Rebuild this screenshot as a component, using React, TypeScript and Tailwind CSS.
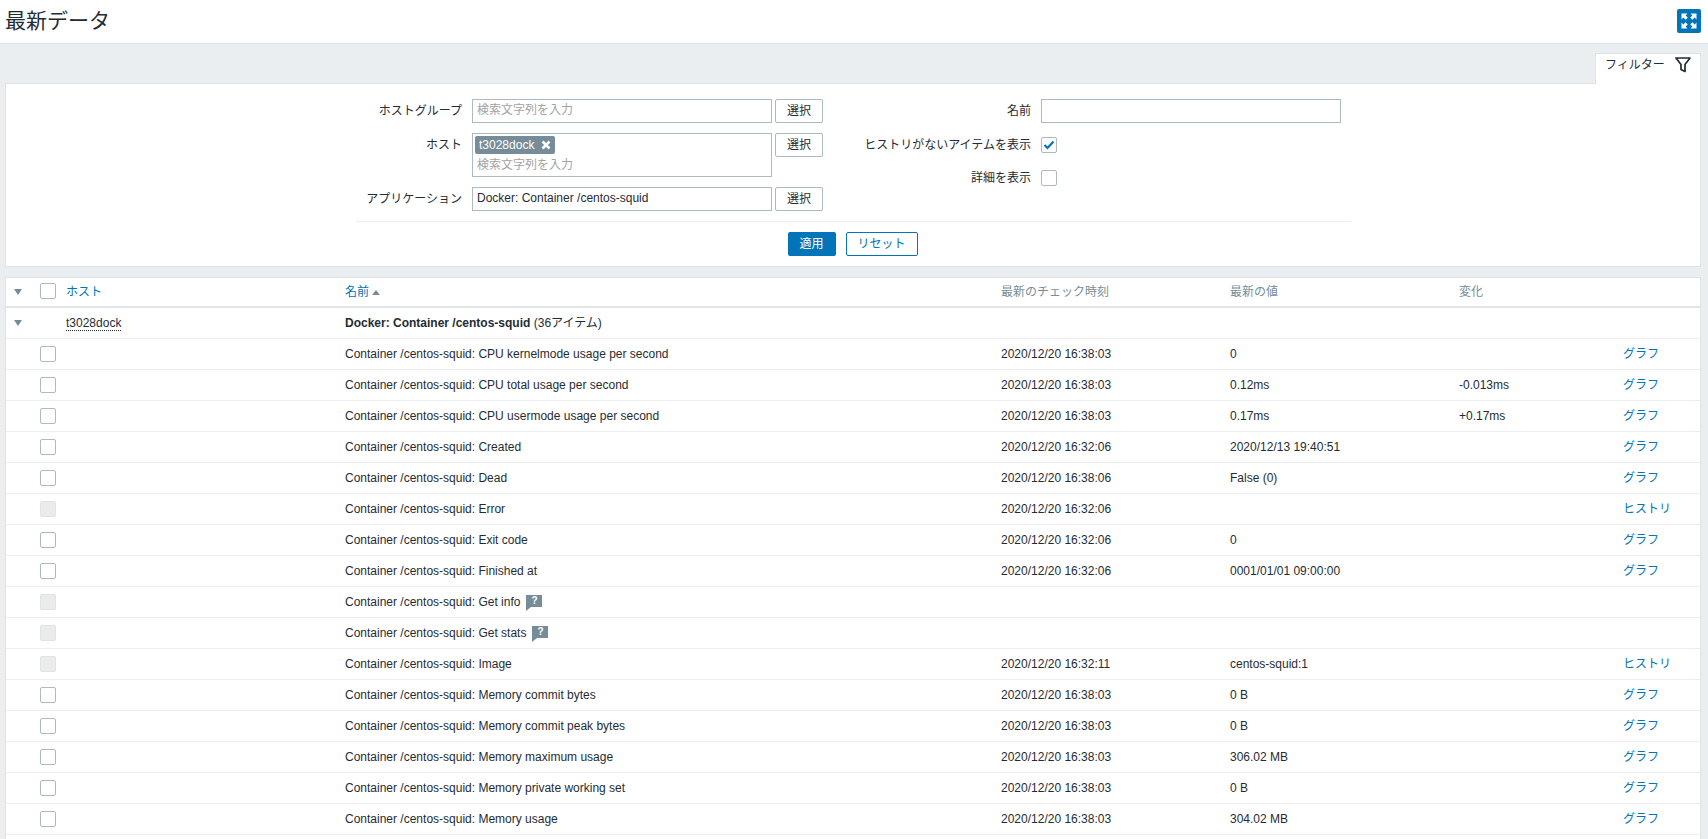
import React from "react";

const jp = "font-['Liberation_Sans','Noto_Sans_CJK_JP',sans-serif]";

function Check({ state = "off" }: { state?: "off" | "on" | "dis" }) {
  return (
    <span
      className={
        state === "dis"
          ? "flex h-4 w-4 items-center justify-center rounded-[2px] border border-[#dfe4e7] bg-[#ebebeb]"
          : "flex h-4 w-4 items-center justify-center rounded-[2px] border border-[#acbbc2] bg-white"
      }
    >
      {state === "on" && (
        <svg width="12" height="10" viewBox="0 0 12 10">
          <path d="M1.5 5 L4.5 8 L10.5 1.5" fill="none" stroke="#0275b8" strokeWidth="2.2" />
        </svg>
      )}
    </span>
  );
}

function Arrow() {
  return (
    <svg width="8" height="6" viewBox="0 0 8 6" className="block">
      <path d="M0 0 H8 L4 6 Z" fill="#768d99" />
    </svg>
  );
}

function Help() {
  return (
    <span className="relative mb-[3px] ml-[6px] inline-flex h-3 w-4 items-center justify-center bg-[#768d99] text-[10px] font-bold leading-none text-white">
      ?
      <svg width="6" height="4" viewBox="0 0 6 4" className="absolute left-0 top-3">
        <path d="M0 0 H5 L0 4 Z" fill="#768d99" />
      </svg>
    </span>
  );
}

function SelectBtn() {
  return (
    <button className="ml-[3px] flex h-6 w-12 items-center justify-center rounded-[2px] border border-[#acbbc2] bg-white text-xs text-[#1f2c33]">
      選択
    </button>
  );
}

function Label({ children, className }: { children: React.ReactNode; className: string }) {
  return <label className={"shrink-0 whitespace-nowrap pr-[10px] text-right text-xs leading-6 text-[#1f2c33] " + className}>{children}</label>;
}

function Placeholder() {
  return <div className="pl-[4px] text-xs leading-[21px] text-[#a3a3a3]">検索文字列を入力</div>;
}

type Item = {
  name: string;
  time?: string;
  value?: string;
  change?: string;
  action?: string;
  dis?: boolean;
  help?: boolean;
};

const items: Item[] = [
  { name: "CPU kernelmode usage per second", time: "2020/12/20 16:38:03", value: "0", action: "グラフ" },
  { name: "CPU total usage per second", time: "2020/12/20 16:38:03", value: "0.12ms", change: "-0.013ms", action: "グラフ" },
  { name: "CPU usermode usage per second", time: "2020/12/20 16:38:03", value: "0.17ms", change: "+0.17ms", action: "グラフ" },
  { name: "Created", time: "2020/12/20 16:32:06", value: "2020/12/13 19:40:51", action: "グラフ" },
  { name: "Dead", time: "2020/12/20 16:38:06", value: "False (0)", action: "グラフ" },
  { name: "Error", time: "2020/12/20 16:32:06", action: "ヒストリ", dis: true },
  { name: "Exit code", time: "2020/12/20 16:32:06", value: "0", action: "グラフ" },
  { name: "Finished at", time: "2020/12/20 16:32:06", value: "0001/01/01 09:00:00", action: "グラフ" },
  { name: "Get info", dis: true, help: true },
  { name: "Get stats", dis: true, help: true },
  { name: "Image", time: "2020/12/20 16:32:11", value: "centos-squid:1", action: "ヒストリ", dis: true },
  { name: "Memory commit bytes", time: "2020/12/20 16:38:03", value: "0 B", action: "グラフ" },
  { name: "Memory commit peak bytes", time: "2020/12/20 16:38:03", value: "0 B", action: "グラフ" },
  { name: "Memory maximum usage", time: "2020/12/20 16:38:03", value: "306.02 MB", action: "グラフ" },
  { name: "Memory private working set", time: "2020/12/20 16:38:03", value: "0 B", action: "グラフ" },
  { name: "Memory usage", time: "2020/12/20 16:38:03", value: "304.02 MB", action: "グラフ" },
];

const cols = "grid grid-cols-[34px_26px_279px_656px_229px_229px_164px_1fr] items-center";

export default function App() {
  return (
    <div className={"h-[839px] w-[1708px] overflow-hidden bg-[#ebeef0] text-xs text-[#1f2c33] " + jp}>
      <header className="flex h-[44px] items-start justify-between border-b border-[#dfe4e7] bg-white pl-[5px] pr-[7px]">
        <h1 className="pt-[5px] text-[21px] font-normal leading-[32px] text-[#1f2c33]">最新データ</h1>
        <button className="mt-[9px] flex h-6 w-6 items-center justify-center rounded-[2px] bg-[#0275b8]">
          <svg width="16" height="16" viewBox="0 0 16 16">
            <g fill="#fff">
              <path d="M0.5 0.5 H6.5 L4.6 2.4 L6.8 4.6 L4.6 6.8 L2.4 4.6 L0.5 6.5 Z" />
              <path d="M15.5 0.5 H9.5 L11.4 2.4 L9.2 4.6 L11.4 6.8 L13.6 4.6 L15.5 6.5 Z" />
              <path d="M0.5 15.5 H6.5 L4.6 13.6 L6.8 11.4 L4.6 9.2 L2.4 11.4 L0.5 9.5 Z" />
              <path d="M15.5 15.5 H9.5 L11.4 13.6 L9.2 11.4 L11.4 9.2 L13.6 11.4 L15.5 9.5 Z" />
            </g>
          </svg>
        </button>
      </header>

      <div className="ml-[5px] mt-[9px] w-[1696px]">
        <div className="flex justify-end">
          <div className="relative z-10 -mb-px flex h-[31px] w-[106px] items-start border border-b-0 border-[#dfe4e7] bg-white pl-[9px] pt-[3px]">
            <span className="text-xs leading-4">フィルター</span>
            <svg width="16" height="16" viewBox="0 0 16 16" className="ml-[10px]">
              <path d="M1 1 H15 L10 7.5 V14.5 L6 12.5 V7.5 Z" fill="none" stroke="#1f2c33" strokeWidth="1.7" strokeLinejoin="round" />
            </svg>
          </div>
        </div>

        <section className="h-[184px] border border-[#dfe4e7] bg-white">
          <div className="ml-[350px] w-[995px]">
            <div className="flex border-b border-[#ebeef0] pb-[10px] pt-[15px]">
              <div className="flex w-[485px] flex-col gap-[10px]">
                <div className="flex">
                  <Label className="w-[116px]">ホストグループ</Label>
                  <div className="h-6 w-[300px] border border-[#acbbc2] bg-white"><Placeholder /></div>
                  <SelectBtn />
                </div>
                <div className="flex">
                  <Label className="w-[116px]">ホスト</Label>
                  <div className="h-[44px] w-[300px] border border-[#acbbc2] bg-white pl-[2px] pt-[2px]">
                    <span className="flex h-[18px] w-20 items-center rounded-[2px] bg-[#768d99] pl-1 text-xs leading-none text-white">
                      t3028dock
                      <svg width="10" height="10" viewBox="0 0 10 10" className="ml-[7px]">
                        <path d="M1.5 1.5 L8.5 8.5 M8.5 1.5 L1.5 8.5" stroke="#fff" strokeWidth="2.6" />
                      </svg>
                    </span>
                    <div className="-ml-[2px] mt-[1px]"><Placeholder /></div>
                  </div>
                  <SelectBtn />
                </div>
                <div className="flex">
                  <Label className="w-[116px]">アプリケーション</Label>
                  <div className="h-6 w-[300px] border border-[#acbbc2] bg-white pl-[4px] text-xs leading-[21px]">Docker: Container /centos-squid</div>
                  <SelectBtn />
                </div>
              </div>
              <div className="flex flex-col gap-[10px]">
                <div className="flex">
                  <Label className="w-[200px]">名前</Label>
                  <div className="h-6 w-[300px] border border-[#acbbc2] bg-white" />
                </div>
                <div className="flex h-6 items-center">
                  <Label className="w-[200px]">ヒストリがないアイテムを表示</Label>
                  <Check state="on" />
                </div>
                <div className="flex h-[22px] items-center">
                  <Label className="w-[200px]">詳細を表示</Label>
                  <Check />
                </div>
              </div>
            </div>
            <div className="mt-[10px] flex justify-center gap-[10px] pr-[2px]">
              <button className="flex h-6 w-12 items-center justify-center rounded-[2px] bg-[#0275b8] text-xs text-white">適用</button>
              <button className="flex h-6 w-[72px] items-center justify-center rounded-[2px] border border-[#0275b8] bg-white text-xs text-[#0275b8]">リセット</button>
            </div>
          </div>
        </section>

        <section className="mt-[10px] border border-[#dfe4e7] bg-white pb-10">
          <div className={cols + " h-[30px] border-b-2 border-[#dfe4e7]"}>
            <div className="pl-2"><Arrow /></div>
            <div className="-mt-[2px]"><Check /></div>
            <a className="text-[#0275b8]">ホスト</a>
            <div className="flex items-center text-[#0275b8]">
              名前
              <svg width="8" height="5" viewBox="0 0 8 5" className="ml-[3px]">
                <path d="M0 5 H8 L4 0 Z" fill="#768d99" />
              </svg>
            </div>
            <div className="text-[#768d99]">最新のチェック時刻</div>
            <div className="text-[#768d99]">最新の値</div>
            <div className="text-[#768d99]">変化</div>
            <div />
          </div>
          <div className={cols + " h-[31px] border-b border-[#ebeef0]"}>
            <div className="pl-2"><Arrow /></div>
            <div />
            <div><span className="border-b border-dotted border-[#1f2c33] leading-4">t3028dock</span></div>
            <div><span className="font-bold">Docker: Container /centos-squid</span> (36アイテム)</div>
            <div />
            <div />
            <div />
            <div />
          </div>
          {items.map((it) => (
            <div key={it.name} className={cols + " h-[31px] border-b border-[#ebeef0]"}>
              <div />
              <div><Check state={it.dis ? "dis" : "off"} /></div>
              <div />
              <div className="flex items-center">
                Container /centos-squid: {it.name}
                {it.help && <Help />}
              </div>
              <div>{it.time}</div>
              <div>{it.value}</div>
              <div>{it.change}</div>
              <a className="text-[#0275b8]">{it.action}</a>
            </div>
          ))}
        </section>
      </div>
    </div>
  );
}
